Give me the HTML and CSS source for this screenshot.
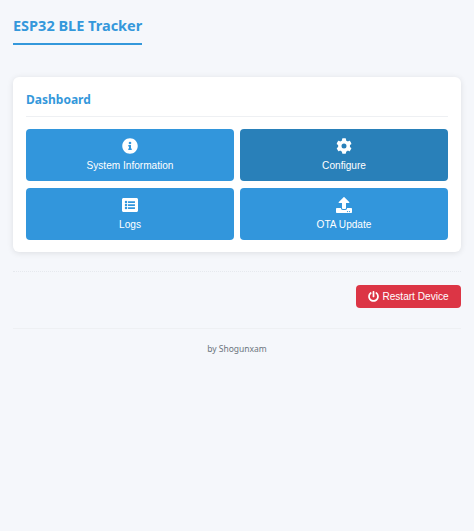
FILE: index.html
```html
<!DOCTYPE html>
<html lang="en">
  <head>
    <meta charset="UTF-8" />
    <meta name="viewport" content="width=device-width, initial-scale=1.0" />
    <title>ESP32 BLE Tracker</title>
    <link rel="stylesheet" href="styles.css">
  </head>
  <body>
    <div class="container">
      <header class="header">
        <h1>ESP32 BLE Tracker</h1>
      </header>

      <div class="card">
        <h2>Dashboard</h2>
        <div class="button-grid">
          <a class="menu-btn" href="#">
            <svg class="icon" viewBox="0 0 512 512"><path d="M256 8C119 8 8 119 8 256s111 248 248 248 248-111 248-248S393 8 256 8zm0 110a42 42 0 1 1 0 84 42 42 0 0 1 0-84zm56 254c0 7-5 12-12 12h-88c-7 0-12-5-12-12v-24c0-7 5-12 12-12h12v-64h-12c-7 0-12-5-12-12v-24c0-7 5-12 12-12h64c7 0 12 5 12 12v100h12c7 0 12 5 12 12v24z"/></svg>
            <span>System Information</span>
          </a>
          <a class="menu-btn active" href="#">
            <svg class="icon" viewBox="0 0 512 512"><path d="M487 316l-42-25a190 190 0 0 0 0-70l42-25c5-3 7-8 5-14-11-35-30-67-54-93-4-4-10-5-15-2l-42 24c-18-15-38-27-60-35V28c0-6-4-10-9-11-37-8-74-8-109 0-5 1-9 5-9 11v48c-22 8-42 20-60 35L92 87c-5-3-11-2-15 2-24 26-43 58-54 93-2 6 0 11 5 14l42 25a190 190 0 0 0 0 70l-42 25c-5 3-7 8-5 14 11 35 30 67 54 93 4 4 10 5 15 2l42-24c18 15 38 27 60 35v48c0 6 4 10 9 11 37 8 74 8 109 0 5-1 9-5 9-11v-48c22-8 42-20 60-35l42 24c5 3 11 2 15-2 24-26 43-58 54-93 2-6 0-11-5-14zM256 336a80 80 0 1 1 0-160 80 80 0 0 1 0 160z"/></svg>
            <span>Configure</span>
          </a>
          <a class="menu-btn" href="#">
            <svg class="icon" viewBox="0 0 512 512"><path d="M464 480H48c-26 0-48-22-48-48V80c0-26 22-48 48-48h416c26 0 48 22 48 48v352c0 26-22 48-48 48zM128 120a40 40 0 1 0 0 80 40 40 0 0 0 0-80zm0 96a40 40 0 1 0 0 80 40 40 0 0 0 0-80zm0 96a40 40 0 1 0 0 80 40 40 0 0 0 0-80zm288-136v-32c0-7-5-12-12-12H202c-7 0-12 5-12 12v32c0 7 5 12 12 12h202c7 0 12-5 12-12zm0 96v-32c0-7-5-12-12-12H202c-7 0-12 5-12 12v32c0 7 5 12 12 12h202c7 0 12-5 12-12zm0 96v-32c0-7-5-12-12-12H202c-7 0-12 5-12 12v32c0 7 5 12 12 12h202c7 0 12-5 12-12z"/></svg>
            <span>Logs</span>
          </a>
          <a class="menu-btn" href="#">
            <svg class="icon" viewBox="0 0 512 512"><path d="M296 384h-80c-13 0-24-11-24-24V192h-88c-18 0-27-21-14-34L242 7c8-8 20-8 28 0l152 151c13 13 4 34-14 34h-88v168c0 13-11 24-24 24zm216-8v112c0 13-11 24-24 24H24c-13 0-24-11-24-24V376c0-13 11-24 24-24h136v8c0 31 25 56 56 56h80c31 0 56-25 56-56v-8h136c13 0 24 11 24 24zm-124 88a20 20 0 1 0-40 0 20 20 0 0 0 40 0zm64 0a20 20 0 1 0-40 0 20 20 0 0 0 40 0z"/></svg>
            <span>OTA Update</span>
          </a>
        </div>
      </div>

      <div class="actions">
        <button type="button" class="btn-restart">
          <svg class="icon-small" viewBox="0 0 512 512"><path d="M400 54c63 45 104 118 104 202 0 137-111 248-247 248C120 504 8 393 8 256c0-84 41-157 104-202 11-8 28-4 35 8l16 29c6 11 3 24-7 32-42 31-68 80-68 133 0 92 74 168 168 168 92 0 169-74 168-169 0-52-25-102-68-133-10-7-13-21-7-31l16-29c7-12 23-16 35-8zM296 264V24c0-13-11-24-24-24h-32c-13 0-24 11-24 24v240c0 13 11 24 24 24h32c13 0 24-11 24-24z"/></svg>
          Restart Device
        </button>
      </div>

      <footer class="footer">by Shogunxam</footer>
    </div>
  </body>
</html>
```

FILE: styles.css
```css
html,
body {
  height: 100%;
}
body {
  margin: 0;
  background-color: #f5f7fb;
  font-family: "Liberation Sans", Arial, sans-serif;
}
.container {
  padding: 0 13px;
}
.header {
  padding-top: 15px;
  margin-bottom: 32px;
}
h1 {
  display: inline-block;
  margin: 0;
  padding-bottom: 7px;
  border-bottom: 2px solid #3498db;
  color: #3498db;
  font-family: "Noto Sans", "Open Sans", sans-serif;
  font-size: 14.5px;
  font-weight: 700;
  line-height: 21px;
}
.card {
  background: white;
  padding: 12px 13px;
  border-radius: 6px;
  box-shadow: 0 1px 6px rgba(0, 0, 0, 0.1);
}
h2 {
  margin: 0 0 12px;
  padding-bottom: 6px;
  border-bottom: 1px solid #eef0f3;
  color: #3498db;
  font-family: "Noto Sans", "Open Sans", sans-serif;
  font-size: 12px;
  font-weight: 700;
  line-height: 21px;
}
.button-grid {
  display: grid;
  grid-template-columns: 1fr 1fr;
  gap: 7px 6px;
}
.menu-btn {
  display: flex;
  flex-direction: column;
  align-items: center;
  gap: 5px;
  height: 52px;
  box-sizing: border-box;
  padding-top: 9px;
  background-color: #3296dc;
  border-radius: 4px;
  color: white;
  font-size: 10.1px;
  line-height: 14px;
  text-decoration: none;
}
.menu-btn.active {
  background-color: #2980b9;
}
.icon {
  width: 16px;
  height: 16px;
  fill: white;
}
.actions {
  display: flex;
  justify-content: flex-end;
  margin-top: 19px;
  padding-top: 13px;
  border-top: 1px dotted #e6e9ee;
}
.btn-restart {
  display: flex;
  align-items: center;
  justify-content: center;
  gap: 3px;
  width: 105px;
  height: 23px;
  padding: 0;
  background-color: #dc3545;
  border: none;
  border-radius: 4px;
  color: white;
  font-family: "Liberation Sans", Arial, sans-serif;
  font-size: 10.1px;
}
.icon-small {
  width: 11px;
  height: 11px;
  fill: white;
}
.footer {
  margin-top: 20px;
  padding-top: 13px;
  border-top: 1px solid #eef0f3;
  color: #6c757d;
  font-family: "Noto Sans", "Open Sans", sans-serif;
  font-size: 8.5px;
  line-height: 14px;
  text-align: center;
}
```
